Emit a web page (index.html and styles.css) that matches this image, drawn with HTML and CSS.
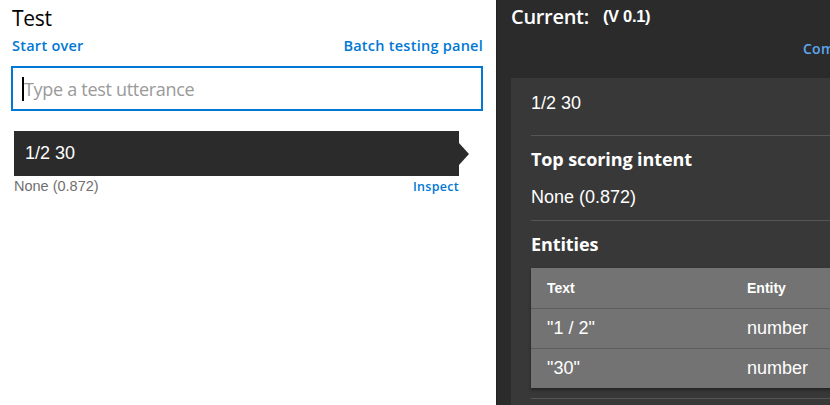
FILE: index.html
```html
<!DOCTYPE html>
<html>
<head>
<meta charset="utf-8">
<link rel="stylesheet" href="styles.css">
</head>
<body>
<div class="page">
  <section class="left">
    <h1 class="title">Test</h1>
    <div class="links">
      <a class="link">Start over</a>
      <a class="link">Batch testing panel</a>
    </div>
    <div class="input"><span class="caret"></span><span class="placeholder">Type a test utterance</span></div>
    <div class="utterance">1/2 30</div>
    <div class="meta">
      <span class="score">None (0.872)</span>
      <a class="link small">Inspect</a>
    </div>
  </section>
  <section class="right">
    <div class="head"><span class="cur">Current:</span><span class="ver">(V 0.1)</span></div>
    <div class="subhead"><a class="link dark">Compare</a></div>
    <div class="card">
      <div class="row utt">1/2 30</div>
      <div class="row block">
        <div class="label">Top scoring intent</div>
        <div class="value">None (0.872)</div>
      </div>
      <div class="row block ents">
        <div class="label">Entities</div>
        <table class="table">
          <thead><tr><th>Text</th><th>Entity</th></tr></thead>
          <tbody>
            <tr><td>"1 / 2"</td><td>number</td></tr>
            <tr><td>"30"</td><td>number</td></tr>
          </tbody>
        </table>
      </div>
      <div class="row end"></div>
    </div>
  </section>
</div>
</body>
</html>
```
FILE: styles.css
```css
html, body { margin: 0; padding: 0; }
body { width: 830px; height: 405px; overflow: hidden; background: #fff; font-family: "Open Sans", "Noto Sans", sans-serif; }
.page { display: flex; height: 405px; }
.left { width: 496px; flex: none; padding: 0 13px 0 11px; box-sizing: border-box; }
.title { margin: 0; padding: 4px 0 0 1px; font-size: 21px; font-weight: 400; line-height: 28px; color: #000; letter-spacing: -0.3px; }
.links { display: flex; justify-content: space-between; align-items: center; height: 26px; margin-top: 0; padding-left: 1px; }
.link { color: #0078d4; font-size: 14.5px; font-weight: 600; letter-spacing: 0.25px; text-decoration: none; }
.input { margin-top: 8px; height: 45px; border: 2px solid #0078d4; box-sizing: border-box; display: flex; align-items: center; padding-left: 9px; }
.caret { width: 2px; height: 24px; background: #000; flex: none; }
.placeholder { color: #9a9a9a; font-size: 18px; font-family: "Open Sans", sans-serif; letter-spacing: -0.3px; }
.utterance { position: relative; margin: 20px 0 0 3px; width: 445px; height: 45px; background: #2b2b2b; color: #fff; font-family: "Liberation Sans", Arial, sans-serif; font-size: 18px; line-height: 45px; padding-left: 11px; box-sizing: border-box; }
.utterance::after { content: ""; position: absolute; right: -10px; top: 12px; border-top: 11px solid transparent; border-bottom: 11px solid transparent; border-left: 10px solid #2b2b2b; }
.meta { display: flex; justify-content: space-between; align-items: center; width: 445px; margin-left: 3px; height: 20px; }
.score { color: #707070; font-family: "Liberation Sans", Arial, sans-serif; font-size: 14.5px; }
.link.small { font-size: 12.5px; letter-spacing: 0.3px; }
.right { flex: 1; background: #2b2b2b; border-left: 1px solid #222; padding-left: 14px; overflow: hidden; color: #fff; min-width: 0; }
.head { height: 32px; display: flex; align-items: center; padding-top: 0; }
.cur { font-size: 20px; font-weight: 600; letter-spacing: -0.3px; }
.ver { font-family: "Liberation Sans", Arial, sans-serif; font-weight: 700; font-size: 16.5px; margin-left: 14px; letter-spacing: -0.3px; }
.subhead { height: 32px; display: flex; align-items: center; padding-left: 292px; white-space: nowrap; }
.link.dark { color: #5ea8f0; font-size: 14px; }
.card { margin-top: 14px; background: #383838; padding-left: 20px; width: 600px; }
.row { border-bottom: 1px solid #555; }
.utt { height: 57px; line-height: 50px; font-family: "Liberation Sans", Arial, sans-serif; font-size: 18px; }
.block { padding-top: 11px; }
.label { font-size: 18px; font-weight: 700; line-height: 24px; letter-spacing: -0.1px; }
.value { font-family: "Liberation Sans", Arial, sans-serif; font-size: 18px; line-height: 28px; margin-top: 12px; padding-bottom: 9px; }
.ents { padding-bottom: 10px; }
.table { margin-top: 12px; width: 500px; border-collapse: collapse; background: #737373; font-family: "Liberation Sans", Arial, sans-serif; box-shadow: 0 2px 3px rgba(0,0,0,0.4); }
.table th { text-align: left; font-weight: 700; font-size: 14px; height: 40px; padding: 0 0 0 16px; border-bottom: 1px solid #5d5d5d; }
.table td { font-size: 18px; height: 39px; padding: 0 0 0 16px; border-bottom: 1px solid #5d5d5d; }
.table tr:last-child td { border-bottom: none; }
.table th:first-child, .table td:first-child { width: 184px; }
.end { height: 30px; }
```
